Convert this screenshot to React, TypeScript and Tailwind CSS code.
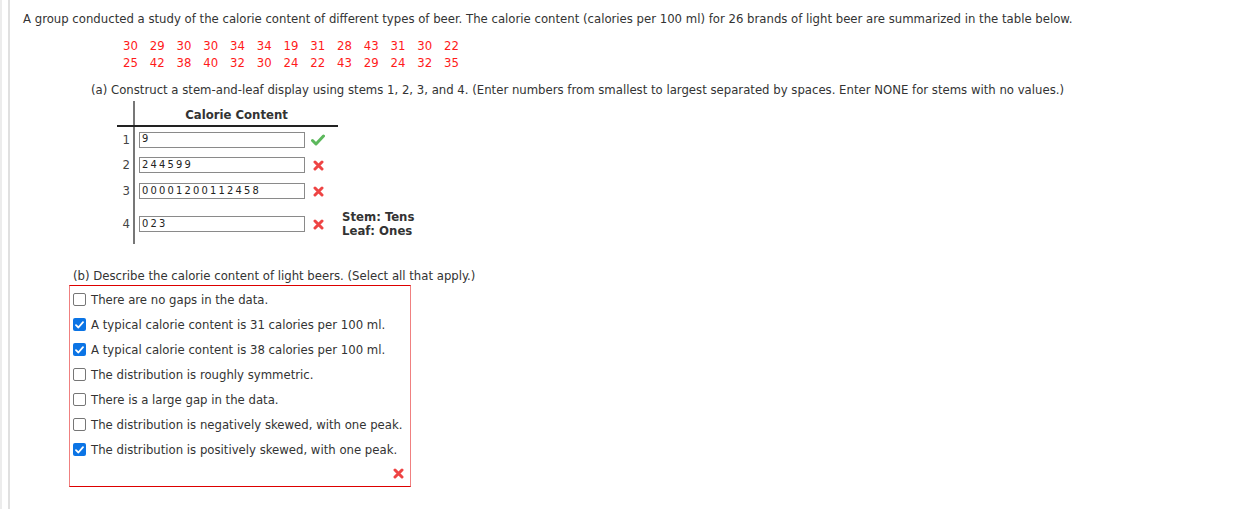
import React from 'react';

const row1 = [30, 29, 30, 30, 34, 34, 19, 31, 28, 43, 31, 30, 22];
const row2 = [25, 42, 38, 40, 32, 30, 24, 22, 43, 29, 24, 32, 35];

const stems = [
    { stem: '1', value: '9', ok: true, h: 'h-[25px]' },
    { stem: '2', value: '244599', ok: false, h: 'h-[26px]' },
    { stem: '3', value: '00001200112458', ok: false, h: 'h-[26px]' },
    { stem: '4', value: '023', ok: false, h: 'h-[40px]' },
];

const options = [
    { text: 'There are no gaps in the data.', checked: false },
    { text: 'A typical calorie content is 31 calories per 100 ml.', checked: true },
    { text: 'A typical calorie content is 38 calories per 100 ml.', checked: true },
    { text: 'The distribution is roughly symmetric.', checked: false },
    { text: 'There is a large gap in the data.', checked: false },
    { text: 'The distribution is negatively skewed, with one peak.', checked: false },
    { text: 'The distribution is positively skewed, with one peak.', checked: true },
];

const Check = () => (
    <svg width="14" height="12" viewBox="0 0 14 12">
        <path d="M1.5 6.5 L5 10 L12.5 2" fill="none" stroke="#5cb85c" strokeWidth="3" strokeLinecap="round" strokeLinejoin="round" />
    </svg>
);

const Cross = () => (
    <svg width="11" height="11" viewBox="0 0 11 11" className="block">
        <path d="M2 2 L9 9 M9 2 L2 9" fill="none" stroke="#ee4444" strokeWidth="3" strokeLinecap="round" />
    </svg>
);

const Box = ({ checked }: { checked: boolean }) =>
    checked ? (
        <span className="flex h-[13px] w-[13px] items-center justify-center rounded-[2px] bg-[#0b74e5]">
            <svg width="9" height="8" viewBox="0 0 9 8">
                <path d="M1 4.2 L3.4 6.5 L8 1.2" fill="none" stroke="white" strokeWidth="1.8" strokeLinecap="round" strokeLinejoin="round" />
            </svg>
        </span>
    ) : (
        <span className="h-[13px] w-[13px] rounded-[2px] border border-[#767676] bg-white" />
    );

export default function App() {
    return (
        <div className="flex h-[509px] w-[1250px] bg-white font-['DejaVu_Sans_Condensed','DejaVu_Sans',sans-serif] text-[13px] text-[#333]">
            <div className="w-[2px] bg-[#ececec]" />
            <div className="w-[6px]" />
            <div className="flex-1 border-l-2 border-[#e0e0e0] pl-[13px] pt-[10px]">
                <p className="leading-[17px]">
                    A group conducted a study of the calorie content of different types of beer. The calorie content (calories per 100 ml) for 26 brands of light beer are summarized in the table below.
                </p>

                <div className="ml-[100px] mt-[10px] grid grid-cols-[repeat(13,26.75px)] leading-[17px] text-[#ff1a1a]">
                    {[...row1, ...row2].map((n, i) => (
                        <span key={i}>{n}</span>
                    ))}
                </div>

                <p className="ml-[68px] mt-[10px] leading-[17px]">
                    (a) Construct a stem-and-leaf display using stems 1, 2, 3, and 4. (Enter numbers from smallest to largest separated by spaces. Enter NONE for stems with no values.)
                </p>

                <div className="ml-[94px] mt-[3px] w-[320px]">
                    <div className="flex h-[26px] w-[221px] border-b-2 border-[#222]">
                        <div className="w-[16px]" />
                        <div className="w-[2px] bg-[#777]" />
                        <div className="flex flex-1 items-center justify-center pt-[4px] font-bold text-[#333]">Calorie Content</div>
                    </div>
                    {stems.map(s => (
                        <div key={s.stem} className={`flex ${s.h}`}>
                            <div className="flex w-[16px] items-center justify-end pr-[3px] text-[#444]">{s.stem}</div>
                            <div className="w-[2px] bg-[#777]" />
                            <div className="flex items-center pl-[4px]">
                                <div className="flex h-[16px] w-[166px] items-center border border-[#8a8a8a] pl-[2px] text-[11px] tracking-[2.2px] text-[#222]">
                                    {s.value}
                                </div>
                                <div className="flex w-[26px] justify-center">{s.ok ? <Check /> : <Cross />}</div>
                                {s.stem === '4' && (
                                    <div className="ml-[11px] text-[13px] font-bold leading-[14px] text-[#333]">
                                        <div>Stem: Tens</div>
                                        <div>Leaf: Ones</div>
                                    </div>
                                )}
                            </div>
                        </div>
                    ))}
                </div>

                <p className="ml-[50px] mt-[23px] leading-[17px]">(b) Describe the calorie content of light beers. (Select all that apply.)</p>

                <div className="ml-[46px] mt-[1px] w-[342px] border border-x-[#f08080] border-y-[#dd0000] pb-[7px] pt-[1px]">
                    {options.map((o, i) => (
                        <div key={i} className="flex h-[25px] items-center gap-[5px] pl-[3px]">
                            <Box checked={o.checked} />
                            <span className="leading-[17px]">{o.text}</span>
                        </div>
                    ))}
                    <div className="flex h-[11px] justify-end pr-[6px] mt-[6px]">
                        <Cross />
                    </div>
                </div>
            </div>
        </div>
    );
}
